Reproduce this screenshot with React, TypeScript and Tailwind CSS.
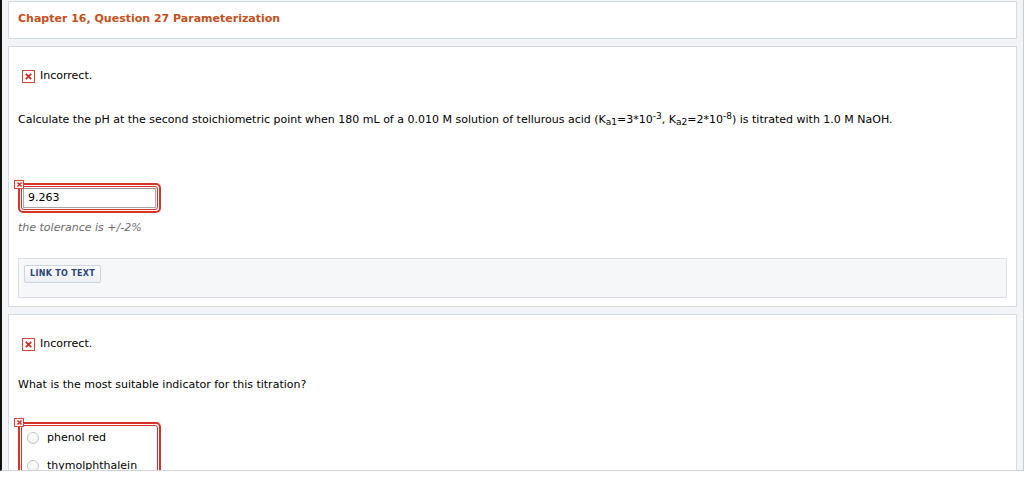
import React from 'react';

const font = { fontFamily: '"DejaVu Sans", Verdana, sans-serif' };

function XBox({ small = false }: { small?: boolean }) {
  if (small) {
    return (
      <span className="flex h-[9px] w-[10px] items-center justify-center border border-[#d6443a] bg-[#fdf1f0]">
        <svg width="5" height="5" viewBox="0 0 5 5">
          <path d="M0.5 0.5 L4.5 4.5 M4.5 0.5 L0.5 4.5" stroke="#d62b20" strokeWidth="1.4" />
        </svg>
      </span>
    );
  }
  return (
    <span className="flex h-[13px] w-[13px] items-center justify-center border border-[#d6443a] bg-white">
      <svg width="7" height="7" viewBox="0 0 7 7">
        <path d="M0.8 0.8 L6.2 6.2 M6.2 0.8 L0.8 6.2" stroke="#d62b20" strokeWidth="1.8" />
      </svg>
    </span>
  );
}

function Incorrect() {
  return (
    <div className="ml-[4px] flex items-center gap-[5px] text-[11px] leading-[14px] text-black">
      <XBox />
      <span>Incorrect.</span>
    </div>
  );
}

function Radio({ label }: { label: string }) {
  return (
    <div className="flex h-[20px] items-center gap-[8px] pl-[5px]">
      <span className="h-[12px] w-[12px] rounded-full border border-[#c4c4c4] bg-gradient-to-b from-white to-[#f1f1f1]" />
      <span className="text-[11px] text-black">{label}</span>
    </div>
  );
}

export default function App() {
  return (
    <div className="h-[479px] w-full bg-white" style={font}>
      <div className="h-[471px] overflow-hidden border-b border-l-[2px] border-r border-b-[#cfd3da] border-l-[#111] border-r-[#c9cdd4] bg-[#f3f4f7] pl-[6px] pr-[6px] pt-px">
        <div className="h-[38px] border border-[#d6dae1] bg-white pl-[9px] pt-[10px]">
          <h1 className="text-[11px] font-bold leading-[14px] text-[#c4501c]">
            Chapter 16, Question 27 Parameterization
          </h1>
        </div>

        <div className="mt-[7px] border border-[#d6dae1] bg-white px-[9px] pb-[8px] pt-[22px]">
          <Incorrect />
          <p className="mt-[30px] text-[11px] leading-[14px] text-black">
            Calculate the pH at the second stoichiometric point when 180 mL of a 0.010 M solution of tellurous acid (K
            <sub className="text-[9px]">a1</sub>=3*10<sup className="text-[9px]">-3</sup>, K
            <sub className="text-[9px]">a2</sub>=2*10<sup className="text-[9px]">-8</sup>) is titrated with 1.0 M NaOH.
          </p>

          <div className="relative mt-[56px] w-[143px]">
            <div className="absolute -left-[4px] -top-[3px] z-10">
              <XBox small />
            </div>
            <div className="rounded-[5px] border-2 border-[#d8332a] p-px">
              <div className="rounded-[3px] border border-[#d8332a] p-px">
                <div className="flex h-[20px] items-center border border-[#a9a9a9] border-t-[#8f8f8f] bg-white pl-[4px] text-[11px] text-black">
                  9.263
                </div>
              </div>
            </div>
          </div>

          <p className="mt-[8px] text-[11px] italic leading-[14px] text-[#6b6b6b]">the tolerance is +/-2%</p>

          <div className="mt-[23px] flex h-[40px] items-start border border-[#dde1e7] bg-[#f6f7f9] pl-[5px] pt-[6px]">
            <button className="flex h-[18px] items-center rounded-[2px] border border-[#cfd5de] bg-gradient-to-b from-[#fbfcfd] to-[#eceff4] px-[5px] text-[8px] font-bold leading-none tracking-[0.3px] text-[#2b4678]">
              LINK TO TEXT
            </button>
          </div>
        </div>

        <div className="mt-[7px] border border-[#d6dae1] bg-white px-[9px] pt-[22px]">
          <Incorrect />
          <p className="mt-[27px] text-[11px] leading-[14px] text-black">
            What is the most suitable indicator for this titration?
          </p>

          <div className="relative mt-[30px] w-[143px]">
            <div className="absolute -left-[4px] -top-[4px] z-10">
              <XBox small />
            </div>
            <div className="rounded-[5px] border-2 border-[#d8332a] p-px">
              <div className="flex flex-col gap-[8px] rounded-[3px] border border-[#d8332a] pb-[20px] pt-[2px]">
                <Radio label="phenol red" />
                <Radio label="thymolphthalein" />
                <Radio label="methyl orange" />
              </div>
            </div>
          </div>
        </div>
      </div>
    </div>
  );
}
